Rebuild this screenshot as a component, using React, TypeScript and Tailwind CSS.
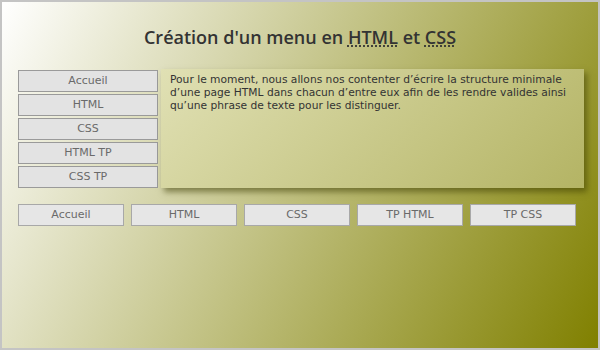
import React from "react";

const sideItems = ["Accueil", "HTML", "CSS", "HTML TP", "CSS TP"];
const topItems = ["Accueil", "HTML", "CSS", "TP HTML", "TP CSS"];

function App() {
  return (
    <div className="w-[600px] h-[350px] border-2 border-[#c4c4c4] bg-[linear-gradient(118deg,#ffffff_0%,#808000_100%)] overflow-hidden">
      {/* Titre */}
      <h1 className="pt-[21px] text-center text-[18px] font-semibold text-[#333] font-['Open_Sans',sans-serif] leading-[28px]">
        Création d'un menu en{" "}
        <abbr className="underline decoration-dotted decoration-[#333] underline-offset-2">HTML</abbr>{" "}
        et{" "}
        <abbr className="underline decoration-dotted decoration-[#333] underline-offset-2">CSS</abbr>
      </h1>

      <div className="flex mt-[18px] ml-[16px] gap-[3px]">
        {/* Menu vertical */}
        <ul className="flex flex-col gap-[2px] w-[140px] pt-[1px]">
          {sideItems.map((item) => (
            <li
              key={item}
              className="h-[22px] flex items-center justify-center border border-[#9a9a9a] bg-[#e3e3e3] text-[#6a6a6a] text-[11px] font-['DejaVu_Sans',sans-serif]"
            >
              {item}
            </li>
          ))}
        </ul>

        {/* Contenu */}
        <div className="w-[423px] h-[119px] pl-[9px] pr-[9px] py-[4px] bg-[linear-gradient(135deg,#e0e0b4,#b4b464)] shadow-[3px_4px_6px_rgba(60,60,0,0.55)]">
          <p className="text-[10.7px] leading-[13px] text-[#333] font-['DejaVu_Sans',sans-serif]">
            Pour le moment, nous allons nos contenter d’écrire la structure minimale d’une page HTML dans chacun d’entre eux afin de les rendre valides ainsi qu’une phrase de texte pour les distinguer.
          </p>
        </div>
      </div>

      {/* Menu horizontal */}
      <ul className="flex gap-[7px] mt-[16px] ml-[16px]">
        {topItems.map((item) => (
          <li
            key={item}
            className="w-[106px] h-[22px] flex items-center justify-center border border-[#a8a8a8] bg-[#e6e6e6] text-[#6a6a6a] text-[11px] font-['DejaVu_Sans',sans-serif]"
          >
            {item}
          </li>
        ))}
      </ul>
    </div>
  );
}

export default App;
